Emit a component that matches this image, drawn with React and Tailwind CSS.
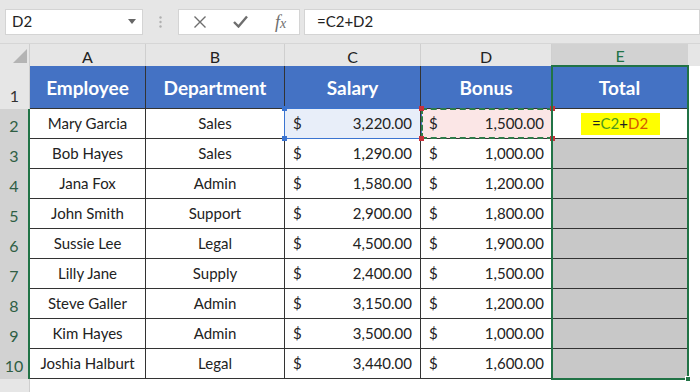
import React from "react";

const people = [
  ["Mary Garcia", "Sales", "3,220.00", "1,500.00"],
  ["Bob Hayes", "Sales", "1,290.00", "1,000.00"],
  ["Jana Fox", "Admin", "1,580.00", "1,200.00"],
  ["John Smith", "Support", "2,900.00", "1,800.00"],
  ["Sussie Lee", "Legal", "4,500.00", "1,900.00"],
  ["Lilly Jane", "Supply", "2,400.00", "1,500.00"],
  ["Steve Galler", "Admin", "3,150.00", "1,200.00"],
  ["Kim Hayes", "Admin", "3,500.00", "1,000.00"],
  ["Joshia Halburt", "Legal", "3,440.00", "1,600.00"],
];

const cols = "grid grid-cols-[30px_116px_139px_136px_131px_136px_1fr]";

const FormulaBar = () => (
  <div className="h-[44px] bg-[#e6e6e6] flex items-center pl-[5px] border-b border-[#d6d6d6]">
    <div className="w-[138px] h-[26px] bg-white border border-[#d4d4d4] flex items-center justify-between pl-[6px] pr-[6px] text-[15px] text-[#222]">
      <span>D2</span>
      <svg width="8" height="5" viewBox="0 0 8 5">
        <path d="M0 0h8L4 5z" fill="#666" />
      </svg>
    </div>
    <div className="w-[35px] flex justify-center">
      <svg width="3" height="12" viewBox="0 0 3 12">
        <circle cx="1.5" cy="1.5" r="1.2" fill="#b0b0b0" />
        <circle cx="1.5" cy="6" r="1.2" fill="#b0b0b0" />
        <circle cx="1.5" cy="10.5" r="1.2" fill="#b0b0b0" />
      </svg>
    </div>
    <div className="w-[122px] h-[26px] bg-white border border-[#d4d4d4] flex items-center pl-[14px]">
      <svg width="14" height="14" viewBox="0 0 14 14">
        <path d="M1.5 1.5l11 11M12.5 1.5l-11 11" stroke="#6e6e6e" strokeWidth="1.4" />
      </svg>
      <svg className="ml-[26px]" width="15" height="13" viewBox="0 0 15 13">
        <path d="M1 7l4.5 4.5L14 1.5" stroke="#6e6e6e" strokeWidth="2.4" fill="none" />
      </svg>
      <span className="ml-[27px] font-['Liberation_Serif',serif] italic text-[18px] text-[#6e6e6e] leading-none">
        f<span className="text-[14px]">x</span>
      </span>
    </div>
    <div className="ml-[4px] flex-1 h-[26px] bg-white border border-[#d4d4d4] flex items-center pl-[12px] text-[15px] text-[#222]">
      =C2+D2
    </div>
  </div>
);

const Sheet = () => (
  <div className="relative">
    {/* column headers */}
    <div className={`${cols} h-[22px] bg-[#e6e6e6] text-[16px] text-[#222]`}>
      <div className="relative border-r border-[#cfcfcf]">
        <svg className="absolute left-[13px] top-[5px]" width="14" height="14" viewBox="0 0 14 14">
          <path d="M14 0v14H0z" fill="#b4b4b4" />
        </svg>
      </div>
      {["A", "B", "C", "D"].map((c) => (
        <div key={c} className="flex items-center justify-center border-r border-[#cfcfcf]">
          {c}
        </div>
      ))}
      <div className="flex items-center justify-center bg-[#d2d2d2] text-[#217346] border-b-2 border-[#217346]">
        E
      </div>
      <div />
    </div>

    {/* header row 1 */}
    <div className={`${cols} h-[43px]`}>
      <div className="bg-[#e6e6e6] flex items-end justify-center pb-[1px] text-[16px] text-[#333] border-r border-[#cfcfcf]">
        1
      </div>
      {["Employee", "Department", "Salary", "Bonus", "Total"].map((h) => (
        <div
          key={h}
          className="bg-[#4472c4] flex items-center justify-center pt-[3px] text-white font-bold text-[19px] border-r border-b border-[#333]"
        >
          {h}
        </div>
      ))}
      <div />
    </div>

    {/* data rows */}
    {people.map((p, i) => (
      <div key={p[0]} className={`${cols} h-[30px] text-[15px] text-[#222]`}>
        <div className="bg-[#d2d2d2] flex items-end justify-center pb-[1px] text-[16px] text-[#2f5e44] border-r-2 border-[#217346]">
          {i + 2}
        </div>
        <div className="flex items-center justify-center border-r border-b border-[#333]">{p[0]}</div>
        <div className="flex items-center justify-center border-r border-b border-[#333]">{p[1]}</div>
        <div
          className={`flex items-center justify-between px-[8px] border-r border-b border-[#333] ${
            i === 0 ? "bg-[#e8eef9]" : ""
          }`}
        >
          <span>$</span>
          <span>{p[2]}</span>
        </div>
        <div
          className={`flex items-center justify-between pl-[8px] pr-[7px] border-r border-b border-[#333] ${
            i === 0 ? "bg-[#fbe6e6]" : ""
          }`}
        >
          <span>$</span>
          <span>{p[3]}</span>
        </div>
        {i === 0 ? (
          <div className="flex items-center justify-center border-b border-[#333]">
            <div className="w-[79px] h-[22px] bg-[#ffff00] flex items-center justify-center">
              <span className="text-[#222]">=</span>
              <span className="text-[#4e9a1c]">C2</span>
              <span className="text-[#222]">+</span>
              <span className="text-[#d45a00]">D2</span>
            </div>
          </div>
        ) : (
          <div className="bg-[#c8c8c8] border-b border-[#333]" />
        )}
        <div />
      </div>
    ))}

    {/* below */}
    <div className={`${cols} h-[13px]`}>
      <div className="bg-[#e6e6e6] border-r border-[#cfcfcf]" />
    </div>

    {/* C2 reference box */}
    <div className="absolute left-[284px] top-[64px] w-[138px] h-[31px] border border-[#3b74d0] pointer-events-none">
      <div className="absolute -left-[3px] -top-[3px] w-[5px] h-[5px] bg-[#3b74d0]" />
      <div className="absolute -right-[3px] -top-[3px] w-[5px] h-[5px] bg-[#3b74d0]" />
      <div className="absolute -left-[3px] -bottom-[3px] w-[5px] h-[5px] bg-[#3b74d0]" />
      <div className="absolute -right-[3px] -bottom-[3px] w-[5px] h-[5px] bg-[#3b74d0]" />
    </div>

    {/* D2 copy marquee */}
    <div className="absolute left-[421px] top-[64px] w-[132px] h-[31px] border-2 border-dashed border-[#2e7d4a] pointer-events-none">
      <div className="absolute -left-[4px] -top-[4px] w-[5px] h-[5px] bg-[#c8303a]" />
      <div className="absolute -right-[4px] -top-[4px] w-[5px] h-[5px] bg-[#c8303a]" />
      <div className="absolute -left-[4px] -bottom-[4px] w-[5px] h-[5px] bg-[#c8303a]" />
      <div className="absolute -right-[4px] -bottom-[4px] w-[5px] h-[5px] bg-[#c8303a]" />
    </div>

    {/* E selection */}
    <div className="absolute left-[551px] top-[21px] w-[138px] h-[315px] border-2 border-[#217346] pointer-events-none">
      <div className="absolute -right-[4px] -bottom-[4px] w-[6px] h-[6px] bg-[#217346] border border-white" />
    </div>
  </div>
);

export default function App() {
  return (
    <div className="w-[700px] h-[392px] overflow-hidden bg-white font-['Lato',sans-serif]">
      <FormulaBar />
      <Sheet />
    </div>
  );
}
